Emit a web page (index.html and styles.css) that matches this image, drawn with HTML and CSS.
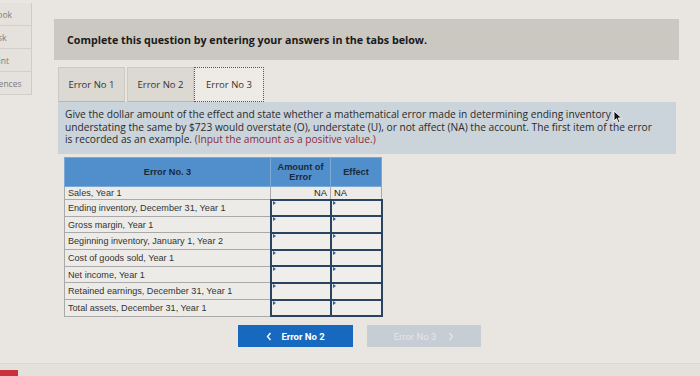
FILE: index.html
```html
<!DOCTYPE html>
<html>
<head>
<meta charset="utf-8">
<link rel="stylesheet" href="styles.css">
</head>
<body>
<div class="screen">
  <div class="layout">
    <nav class="sidebar">
      <div class="side-item">eBook</div>
      <div class="side-item">Ask</div>
      <div class="side-item">Print</div>
      <div class="side-item">References</div>
    </nav>
    <main class="main">
      <div class="prompt">Complete this question by entering your answers in the tabs below.</div>
      <div class="tabs">
        <div class="tab">Error No 1</div>
        <div class="tab">Error No 2</div>
        <div class="tab active">Error No 3</div>
      </div>
      <div class="instructions">
        Give the dollar amount of the effect and state whether a mathematical error made in determining ending inventory<br>
        understating the same by $723 would overstate (O), understate (U), or not affect (NA) the account. The first item of the error<br>
        is recorded as an example. <span class="hint">(Input the amount as a positive value.)</span>
        <svg class="cursor" width="10" height="14" viewBox="0 0 10 14"><path d="M1 1 L1 11 L3.5 8.6 L5.4 12.8 L7 12 L5.2 8 L8.6 8 Z" fill="#111" stroke="#fff" stroke-width="0.9"/></svg>
      </div>
      <table class="grid">
        <colgroup><col class="c-label"><col class="c-amt"><col class="c-eff"></colgroup>
        <thead>
          <tr class="head-row"><th>Error No. 3</th><th>Amount of<br>Error</th><th>Effect</th></tr>
        </thead>
        <tbody>
          <tr class="first-row"><td class="label">Sales, Year 1</td><td class="given amt">NA</td><td class="given">NA</td></tr>
          <tr><td class="label">Ending inventory, December 31, Year 1</td><td class="entry"></td><td class="entry"></td></tr>
          <tr><td class="label">Gross margin, Year 1</td><td class="entry"></td><td class="entry"></td></tr>
          <tr><td class="label">Beginning inventory, January 1, Year 2</td><td class="entry"></td><td class="entry"></td></tr>
          <tr><td class="label">Cost of goods sold, Year 1</td><td class="entry"></td><td class="entry"></td></tr>
          <tr><td class="label">Net income, Year 1</td><td class="entry"></td><td class="entry"></td></tr>
          <tr><td class="label">Retained earnings, December 31, Year 1</td><td class="entry"></td><td class="entry"></td></tr>
          <tr><td class="label">Total assets, December 31, Year 1</td><td class="entry"></td><td class="entry"></td></tr>
        </tbody>
      </table>
      <div class="nav-buttons">
        <div class="btn btn-prev">
          <svg width="6" height="9" viewBox="0 0 6 9"><path d="M4.5 1 L1.5 4.5 L4.5 8" fill="none" stroke="#fff" stroke-width="1.4"/></svg>
          <span>Error No 2</span>
        </div>
        <div class="btn btn-next">
          <span>Error No 3</span>
          <svg width="6" height="9" viewBox="0 0 6 9"><path d="M1.5 1 L4.5 4.5 L1.5 8" fill="none" stroke="#e3e7eb" stroke-width="1.2"/></svg>
        </div>
      </div>
    </main>
  </div>
  <div class="bottom-bar"><span class="red-mark"></span></div>
</div>
</body>
</html>
```
FILE: styles.css
```css
* { box-sizing: border-box; }
html, body { margin: 0; padding: 0; }
body {
  width: 700px;
  height: 376px;
  overflow: hidden;
  background: #e9e6e1;
  font-family: "Open Sans", "DejaVu Sans", sans-serif;
  color: #2b2b2b;
}
.screen { width: 700px; height: 376px; display: flex; flex-direction: column; }
.layout { height: 363px; display: flex; }
.sidebar {
  margin-left: -32px;
  width: 64px;
  padding-top: 3px;
  flex-shrink: 0;
}
.side-item {
  height: 23px;
  line-height: 23px;
  text-align: center;
  font-size: 8.5px;
  color: #7a7a7a;
  background: #e5e2dd;
  border-bottom: 1px solid #d2cfca;
  border-right: 1px solid #cfccc7;
}
.main {
  margin-left: 22px;
  padding-top: 19px;
  width: 625px;
  position: relative;
}
.prompt {
  height: 41px;
  background: #cbc7c1;
  padding-left: 13px;
  display: flex;
  align-items: center;
  font-weight: 700;
  font-size: 10.7px;
  color: #1a1a1a;
}
.tabs {
  margin-top: 7px;
  padding-left: 4px;
  display: flex;
  gap: 2px;
}
.tab {
  height: 35px;
  width: 67px;
  display: flex;
  align-items: center;
  justify-content: center;
  font-size: 9.5px;
  color: #333;
  background: #dcd8d2;
  border: 1px solid #cdc9c3;
  border-bottom: 1px solid #b9b6b1;
}
.tab.active {
  width: 70px;
  margin-left: -2px;
  background: #eeebe6;
  border: 1px dotted #555;
}
.instructions {
  position: relative;
  margin-left: 4px;
  width: 618px;
  height: 52px;
  padding: 6px 7px;
  background: #cbd4da;
  font-size: 10.2px;
  line-height: 12.5px;
  color: #2a2a2a;
  white-space: nowrap;
}
.hint { color: #8a2c3c; }
.cursor { position: absolute; left: 555px; top: 8px; }
.grid {
  margin-left: 10px;
  margin-top: 3px;
  border-collapse: collapse;
  table-layout: fixed;
  width: 317px;
  font-family: "Liberation Sans", Arial, sans-serif;
}
.c-label { width: 206px; }
.c-amt { width: 60px; }
.c-eff { width: 51px; }
.head-row { height: 29px; }
.head-row th {
  background: #508fcb;
  color: #1b2a3b;
  font-size: 9.2px;
  font-weight: 700;
  line-height: 10.5px;
  border: 1px solid #7aa9d6;
  padding: 0;
}
.grid td {
  height: 16.7px;
  padding: 0;
  font-size: 9.1px;
  color: #333;
}
.grid tr.first-row td { height: 13px; }
.label {
  background: #ecebe8;
  border: 1px solid #a9a9a9;
  padding-left: 3px !important;
  white-space: nowrap;
}
.given {
  background: #ecebe8;
  border: 1px solid #a9a9a9;
  color: #222 !important;
  font-size: 9.4px !important;
  padding-left: 3px !important;
}
.given.amt { text-align: right; padding-right: 3px !important; padding-left: 0 !important; }
.entry {
  position: relative;
  background: #efeeeb;
  border: 2px solid #2a4360;
}
.entry::before {
  content: "";
  position: absolute;
  left: 1px;
  top: 0;
  border-left: 3px solid #2e62a3;
  border-top: 2px solid transparent;
  border-bottom: 2px solid transparent;
}
.nav-buttons {
  margin-top: 8px;
  margin-left: 184px;
  display: flex;
  gap: 14px;
}
.btn {
  height: 22px;
  width: 115px;
  display: flex;
  align-items: center;
  justify-content: center;
  gap: 9px;
  font-family: Roboto, "Liberation Sans", sans-serif;
  font-size: 9.5px;
  font-weight: 700;
}
.btn-prev { background: #1769bf; color: #fff; }
.btn-next { width: 114px; background: #c6cdd4; color: #e3e7eb; font-weight: 400; gap: 12px; }
.bottom-bar {
  height: 13px;
  border-top: 1px solid #dad7d2;
  background: #e4e1dc;
  position: relative;
}
.red-mark {
  position: absolute;
  left: 0;
  bottom: 0;
  width: 18px;
  height: 6px;
  background: #c8323a;
}
```
